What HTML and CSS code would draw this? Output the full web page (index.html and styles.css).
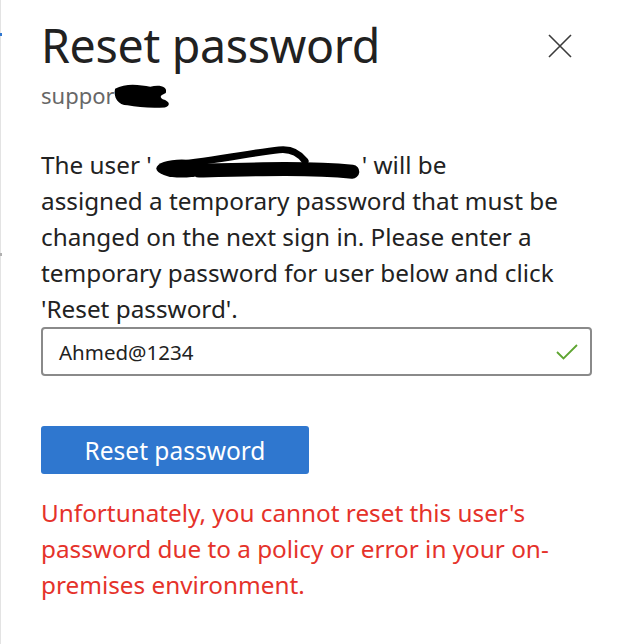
FILE: index.html
```html
<!DOCTYPE html>
<html lang="en">
<head>
<meta charset="utf-8">
<title>Reset password</title>
<link rel="stylesheet" href="styles.css">
</head>
<body>
<div class="panel">
  <span class="edge-mark"></span>
  <span class="edge-tick"></span>
  <header class="head">
    <div class="titles">
      <h1 class="title">Reset password</h1>
      <div class="sub">suppor<svg class="blot-sub" width="58" height="28" viewBox="0 0 56 26"><path d="M2 7 C12 1 26 3 36 5 C44 3 53 4 51 11 C47 13 44 14 48 17 C55 19 56 23 50 25 C38 26 24 25 14 23 C5 23 0 15 2 7 Z" fill="#000"/></svg></div>
    </div>
    <button class="close" aria-label="Close"><svg width="24" height="24" viewBox="0 0 24 24"><path d="M1 1 L23 23 M23 1 L1 23" stroke="#3b3b3b" stroke-width="1.6" fill="none"/></svg></button>
  </header>
  <p class="desc">The user '<svg class="blot-user" width="218" height="40" viewBox="0 0 780 150"><ellipse cx="115" cy="92" rx="95" ry="34" fill="#000"/><path d="M90 78 C250 60 400 30 480 22 C530 16 560 40 578 64" stroke="#000" stroke-width="26" fill="none" stroke-linecap="round"/><path d="M180 100 C400 94 600 88 755 104" stroke="#000" stroke-width="52" fill="none" stroke-linecap="round"/></svg>' will be<br>assigned a temporary password that must be changed on the next sign in. Please enter a temporary password for user below and click 'Reset password'.</p>
  <div class="field">
    <span class="field-value">Ahmed@1234</span>
    <svg class="check" width="22" height="16" viewBox="0 0 22 16"><path d="M1 8 L7.5 14.5 L21 1" stroke="#5ea531" stroke-width="1.8" fill="none"/></svg>
  </div>
  <button class="primary">Reset password</button>
  <p class="error">Unfortunately, you cannot reset this user's password due to a policy or error in your on-premises environment.</p>
</div>
</body>
</html>
```
FILE: styles.css
```css
html, body {
  margin: 0;
  padding: 0;
  background: #ffffff;
}
body {
  font-family: "Noto Sans", "Open Sans", sans-serif;
  color: #252525;
}
.panel {
  position: relative;
  box-sizing: border-box;
  height: 644px;
  border-left: 1px solid #e3e3e3;
  padding: 15px 32px 0 40px;
}
.edge-mark {
  position: absolute;
  left: -1px;
  top: 33px;
  width: 2px;
  height: 3px;
  background: #2f77d0;
}
.edge-tick {
  position: absolute;
  left: -1px;
  top: 253px;
  width: 2px;
  height: 3px;
  background: #b0b0b0;
}
.head {
  display: flex;
  justify-content: space-between;
  align-items: flex-start;
}
.title {
  margin: 0;
  font-size: 46.5px;
  font-weight: 400;
  line-height: 60px;
  color: #212121;
  letter-spacing: -0.3px;
}
.sub {
  display: flex;
  align-items: center;
  font-size: 22px;
  line-height: 26px;
  color: #676767;
  margin-top: 6px;
}
.blot-sub {
  margin-left: -2px;
}
.close {
  border: 0;
  background: none;
  padding: 0;
  margin: 19px 20px 0 0;
  width: 24px;
  height: 24px;
  cursor: pointer;
}
.close svg {
  display: block;
}
.desc {
  margin: 38px 0 0;
  font-size: 24.3px;
  line-height: 36px;
  color: #222;
}
.blot-user {
  vertical-align: -2px;
  margin: -20px -2px -8px -6px;
}
.field {
  box-sizing: border-box;
  display: flex;
  align-items: center;
  justify-content: space-between;
  width: 551px;
  height: 49px;
  border: 2px solid #8a8a8a;
  border-radius: 4px;
  padding: 0 12px 0 16px;
}
.field-value {
  font-size: 20.5px;
  color: #222;
}
.primary {
  display: block;
  margin-top: 50px;
  width: 268px;
  height: 48px;
  border: 0;
  border-radius: 3px;
  background: #2f77cf;
  color: #fff;
  font-family: inherit;
  font-size: 24.5px;
  padding: 0;
}
.error {
  margin: 21px 0 0;
  font-size: 24.3px;
  line-height: 36px;
  color: #e5322a;
}
```
